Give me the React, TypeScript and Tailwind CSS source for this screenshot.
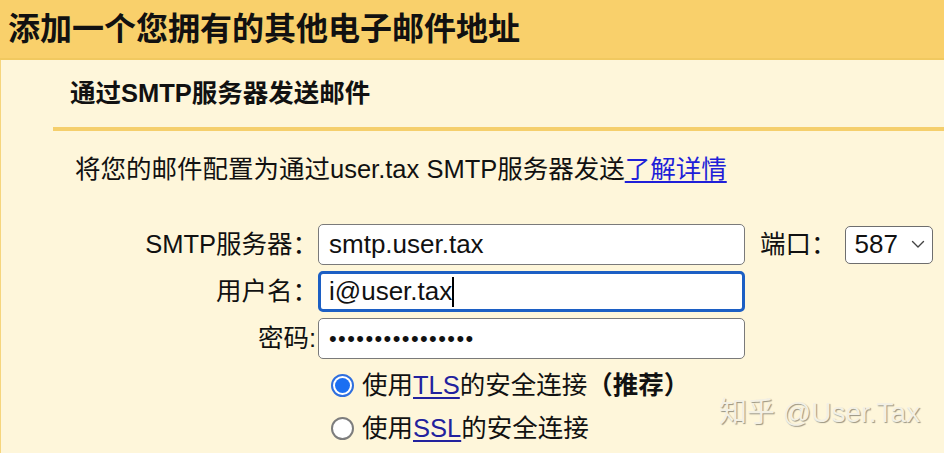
import React from 'react';

function Field({ children, focused = false }: { children: React.ReactNode; focused?: boolean }) {
  return (
    <div
      className={
        focused
          ? 'w-[427px] h-[41px] rounded-[5px] border-[3px] border-[#1c5fc4] bg-white px-[8px] flex items-center text-[26px]'
          : 'w-[427px] h-[41px] rounded-[5px] border border-[#7a7a7a] bg-white px-[10px] flex items-center text-[26px]'
      }
    >
      {children}
    </div>
  );
}

function Radio({ checked = false }: { checked?: boolean }) {
  if (checked) {
    return (
      <span className="w-[23px] h-[23px] rounded-full border-[2px] border-[#2f6fde] bg-white flex items-center justify-center shrink-0">
        <span className="w-[15px] h-[15px] rounded-full bg-[#1b6ff2]" />
      </span>
    );
  }
  return <span className="w-[23px] h-[23px] rounded-full border-[2px] border-[#7d7d7d] bg-white shrink-0" />;
}

export default function App() {
  return (
    <div className="relative w-[944px] h-[453px] overflow-hidden bg-[#fef6da] text-[#111] font-['Liberation_Sans','Noto_Sans_CJK_SC',sans-serif]">
      {/* Header */}
      <div className="h-[60px] bg-[#f9d06b] border-b-2 border-[#f1c960] flex items-center pl-[8px]">
        <h1 className="text-[32px] font-bold leading-none">添加一个您拥有的其他电子邮件地址</h1>
      </div>

      <div className="border-l border-[#f6d57c] h-full">
        {/* Sub heading */}
        <div className="h-[67px] flex items-center pl-[69px]">
          <h2 className="text-[25.5px] font-bold leading-none">通过SMTP服务器发送邮件</h2>
        </div>
        <div className="ml-[52px] h-[4px] bg-[#f5cf6c]" />

        <p className="mt-[23px] pl-[74px] text-[25.5px] leading-[30px]">
          将您的邮件配置为通过user.tax SMTP服务器发送
          <a href="#" className="text-[#1f1fd8] underline underline-offset-[3px]">了解详情</a>
        </p>

        {/* Form */}
        <div className="mt-[40px] flex flex-col gap-[6px] text-[25.5px]">
          <div className="flex items-center">
            <label className="w-[317px] text-right">SMTP服务器：</label>
            <Field>smtp.user.tax</Field>
            <span className="ml-[15px]">端口：</span>
            <div className="ml-[8px] w-[88px] h-[38px] rounded-[5px] border border-[#6e6e6e] bg-white flex items-center pl-[9px] pr-[7px] text-[26px]">
              <span>587</span>
              <svg className="ml-auto" width="14" height="9" viewBox="0 0 14 9" fill="none">
                <path d="M1.5 1.5l5.5 5.5 5.5-5.5" stroke="#444" strokeWidth="1.4" strokeLinecap="round" strokeLinejoin="round" />
              </svg>
            </div>
          </div>

          <div className="flex items-center">
            <label className="w-[317px] text-right">用户名：</label>
            <Field focused>
              <span>i@user.tax</span>
              <span className="w-[2px] h-[30px] bg-black" />
            </Field>
          </div>

          <div className="flex items-center">
            <label className="w-[317px] text-right pr-[2px]">密码:</label>
            <Field>
              <span className="text-[22px] tracking-[1.4px]">••••••••••••••••</span>
            </Field>
          </div>
        </div>

        {/* Radios */}
        <div className="mt-[11px] ml-[330px] flex flex-col gap-[13px] text-[25.5px] leading-[30px]">
          <div className="flex items-center gap-[8px]">
            <Radio checked />
            <span>
              使用<a href="#" className="text-[#22229e] underline underline-offset-[3px]">TLS</a>的安全连接
              <span className="font-bold">（推荐）</span>
            </span>
          </div>
          <div className="flex items-center gap-[8px]">
            <Radio />
            <span>
              使用<a href="#" className="text-[#22229e] underline underline-offset-[3px]">SSL</a>的安全连接
            </span>
          </div>
        </div>
      </div>

      {/* Watermark */}
      <div className="absolute left-[719px] top-[399px] text-[28px] leading-none text-[#f3f0e4] [text-shadow:1px_1px_1px_rgba(0,0,0,0.4)]">
        知乎 @User.Tax
      </div>
    </div>
  );
}
